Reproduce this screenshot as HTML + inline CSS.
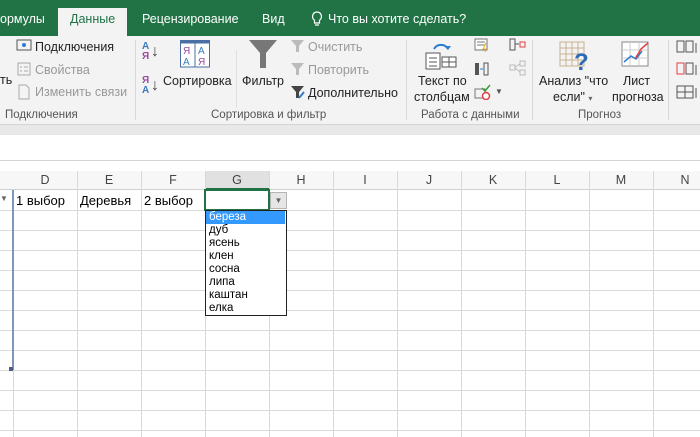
<!DOCTYPE html>
<html><head><meta charset="utf-8"><style>
*{margin:0;padding:0;box-sizing:border-box}
body{width:700px;height:437px;overflow:hidden;background:#fff;font-family:"Liberation Sans","DejaVu Sans",sans-serif;position:relative}
.a{position:absolute;white-space:nowrap}
.tab{color:#fff;font-size:12.5px;top:12px}
.rb{font-size:12.5px;color:#222}
.g{color:#999}
.gl{font-size:11.5px;color:#555;top:109px}
.sep{position:absolute;top:40px;width:1px;height:80px;background:#d8d8d8}
.vl{position:absolute;top:171px;width:1px;height:266px;background:#d9d9d9}
.hl{position:absolute;left:0;width:700px;height:1px;background:#dadada}
.ch{position:absolute;top:171px;height:19px;font-size:12.5px;color:#444;text-align:center;line-height:19px}
.cell{position:absolute;top:193px;font-size:13px;color:#000}
.dd{font-size:11.5px;color:#000;position:absolute;left:209px;line-height:13px}
</style></head><body>
<div class="a" style="left:0;top:0;width:700px;height:36px;background:#217346"></div>
<div class="a" style="left:58px;top:8px;width:69px;height:28px;background:#f3f3f3"></div>
<div class="a tab" style="left:0">ормулы</div>
<div class="a tab" style="left:70px;color:#217346">Данные</div>
<div class="a tab" style="left:142px">Рецензирование</div>
<div class="a tab" style="left:262px">Вид</div>
<svg class="a" style="left:311px;top:11px" width="12" height="16"><path d="M6 1a4.5 4.5 0 0 0-2.5 8.2V12h5V9.2A4.5 4.5 0 0 0 6 1zM4 14h4" fill="none" stroke="#fff" stroke-width="1.2"/></svg>
<div class="a tab" style="left:328px">Что вы хотите сделать?</div>
<div class="a" style="left:0;top:36px;width:700px;height:89px;background:#f3f3f3"></div>
<div class="a" style="left:0;top:124px;width:700px;height:11px;background:#e8e8e8;border-top:1px solid #d5d5d5"></div>
<div class="sep" style="left:135px"></div><div class="sep" style="left:236px;height:58px;top:50px;background:#e0e0e0"></div>
<div class="sep" style="left:406px"></div><div class="sep" style="left:532px"></div><div class="sep" style="left:668px"></div>
<div class="a rb" style="left:0;top:73px">ть</div>
<svg class="a" style="left:16px;top:39px" width="16" height="14"><rect x="1" y="1" width="14" height="10" fill="none" stroke="#555"/><circle cx="8" cy="6" r="2" fill="#2b7cd3"/></svg>
<div class="a rb" style="left:35px;top:40px">Подключения</div>
<svg class="a" style="left:17px;top:62px" width="14" height="14"><rect x="1" y="1" width="12" height="12" fill="none" stroke="#aaa"/><path d="M3 5h2M7 5h4M3 9h2M7 9h4" stroke="#aaa"/></svg>
<div class="a rb g" style="left:35px;top:63px">Свойства</div>
<svg class="a" style="left:17px;top:84px" width="14" height="16"><path d="M2 1h7l3 3v11H2z" fill="none" stroke="#aaa"/></svg>
<div class="a rb g" style="left:35px;top:85px">Изменить связи</div>
<div class="a gl" style="left:5px">Подключения</div>
<div class="a" style="left:142px;top:42px;font-size:10px;line-height:10px;font-weight:bold;color:#3a7bbf">А<br><span style="color:#9a4c9e">Я</span></div><div class="a" style="left:151px;top:43px;font-size:16px;color:#444">↓</div>
<div class="a" style="left:142px;top:76px;font-size:10px;line-height:10px;font-weight:bold;color:#9a4c9e">Я<br><span style="color:#3a7bbf">А</span></div><div class="a" style="left:151px;top:77px;font-size:16px;color:#444">↓</div>
<svg class="a" style="left:180px;top:40px" width="30" height="28"><rect x="0" y="0" width="30" height="3" fill="#4a6fa5"/><rect x=".5" y="3" width="29" height="24" fill="#fff" stroke="#4a6fa5"/><line x1="15" y1="3" x2="15" y2="27" stroke="#4a6fa5"/><text x="3" y="14" font-size="10" fill="#9a4c9e" font-family="Liberation Sans">Я</text><text x="18" y="14" font-size="10" fill="#3a7bbf" font-family="Liberation Sans">А</text><text x="3" y="25" font-size="10" fill="#3a7bbf" font-family="Liberation Sans">А</text><text x="18" y="25" font-size="10" fill="#9a4c9e" font-family="Liberation Sans">Я</text></svg>
<div class="a rb" style="left:163px;top:74px">Сортировка</div>
<svg class="a" style="left:248px;top:39px" width="30" height="30"><path d="M1 1h28L18 14v15h-6V14z" fill="#777"/></svg>
<div class="a rb" style="left:242px;top:74px">Фильтр</div>
<svg class="a" style="left:290px;top:39px" width="16" height="14"><path d="M1 1h13l-5 6v6h-3V7z" fill="#bbb"/></svg>
<div class="a rb g" style="left:308px;top:40px">Очистить</div>
<svg class="a" style="left:290px;top:62px" width="16" height="14"><path d="M1 1h13l-5 6v6h-3V7z" fill="#bbb"/></svg>
<div class="a rb g" style="left:308px;top:63px">Повторить</div>
<svg class="a" style="left:290px;top:85px" width="16" height="14"><path d="M1 1h13l-5 6v6h-3V7z" fill="#444"/><path d="M9 13l5-6" stroke="#2b7cd3" stroke-width="2"/></svg>
<div class="a rb" style="left:308px;top:86px">Дополнительно</div>
<div class="a gl" style="left:211px">Сортировка и фильтр</div>
<svg class="a" style="left:424px;top:39px" width="34" height="32"><path d="M10 10a8 8 0 0 1 14 0" fill="none" stroke="#2b7cd3" stroke-width="2"/><path d="M21 7l3 4 3-4" fill="#2b7cd3"/><rect x="2" y="14" width="14" height="16" fill="#fff" stroke="#555"/><path d="M5 19h8M5 23h8M5 27h8" stroke="#555"/><rect x="18" y="18" width="14" height="10" fill="#fff" stroke="#555"/><path d="M25 18v10M18 23h14" stroke="#555"/></svg>
<div class="a rb" style="left:418px;top:74px">Текст по</div>
<div class="a rb" style="left:414px;top:90px">столбцам</div>
<svg class="a" style="left:474px;top:38px" width="16" height="14"><rect x="1" y="1" width="12" height="11" fill="#fff" stroke="#777"/><path d="M3 4h8M3 7h8" stroke="#777"/><path d="M12 5l-3 6h3l-1 3" stroke="#f0b400" fill="none"/></svg>
<svg class="a" style="left:474px;top:62px" width="16" height="14"><rect x="1" y="1" width="4" height="12" fill="#555"/><rect x="10" y="1" width="4" height="12" fill="none" stroke="#555"/><path d="M6 7h3" stroke="#2b7cd3"/></svg>
<svg class="a" style="left:474px;top:84px" width="18" height="16"><rect x="1" y="5" width="10" height="9" fill="none" stroke="#777"/><path d="M8 4l3 3 5-6" stroke="#3a9a3a" fill="none" stroke-width="1.5"/><circle cx="12" cy="12" r="3.5" fill="#fff" stroke="#e04040" stroke-width="1.5"/></svg>
<div class="a" style="left:495px;top:87px;font-size:8px;color:#555">▼</div>
<svg class="a" style="left:509px;top:38px" width="18" height="14"><rect x="1" y="1" width="5" height="11" fill="none" stroke="#555"/><path d="M6 6h4" stroke="#555"/><rect x="11" y="4" width="5" height="5" fill="none" stroke="#e04040"/></svg>
<svg class="a" style="left:509px;top:60px" width="18" height="16"><rect x="1" y="5" width="5" height="5" fill="none" stroke="#bbb"/><rect x="11" y="1" width="5" height="5" fill="none" stroke="#bbb"/><rect x="11" y="10" width="5" height="5" fill="none" stroke="#bbb"/><path d="M6 7l5-3M6 8l5 4" stroke="#bbb"/></svg>
<div class="a gl" style="left:421px">Работа с данными</div>
<svg class="a" style="left:558px;top:40px" width="34" height="32"><path d="M2 2h24v24H2z M2 8h24M2 14h24M2 20h24M8 2v24M14 2v24M20 2v24" fill="none" stroke="#c8b090"/><text x="16" y="30" font-size="24" font-weight="bold" fill="#2b6cb3" font-family="Liberation Sans">?</text></svg>
<div class="a rb" style="left:539px;top:74px">Анализ "что</div>
<div class="a rb" style="left:553px;top:90px">если" <span style="font-size:8px;color:#666">▾</span></div>
<svg class="a" style="left:620px;top:40px" width="34" height="30"><rect x="2" y="2" width="26" height="24" fill="#fff" stroke="#888"/><path d="M2 10h26M2 18h26M10 2v24M19 2v24" stroke="#ccc"/><path d="M4 22l7-6 5 3 6-8" stroke="#2b7cd3" fill="none" stroke-width="1.5"/><path d="M15 19l6-10 7-6" stroke="#e04040" fill="none" stroke-width="1.5"/></svg>
<div class="a rb" style="left:623px;top:74px">Лист</div>
<div class="a rb" style="left:612px;top:90px">прогноза</div>
<div class="a gl" style="left:578px">Прогноз</div>
<svg class="a" style="left:676px;top:40px" width="24" height="62"><rect x="1" y="1" width="7" height="11" fill="none" stroke="#555"/><rect x="10" y="1" width="7" height="11" fill="none" stroke="#555"/><path d="M20 3v10" stroke="#555"/><rect x="1" y="23" width="7" height="11" fill="none" stroke="#e04040"/><rect x="10" y="23" width="7" height="11" fill="none" stroke="#555"/><path d="M20 25v10" stroke="#555"/><rect x="1" y="46" width="16" height="12" fill="none" stroke="#555"/><path d="M9 46v12M1 52h16M20 48v10" stroke="#555"/></svg>
<div class="a" style="left:0;top:160px;width:700px;height:1px;background:#d4d4d4"></div>
<div class="a" style="left:0;top:171px;width:700px;height:19px;background:#f7f7f7;border-bottom:1px solid #d0d0d0"></div>
<div class="a" style="left:205px;top:171px;width:64px;height:19px;background:#e1e1e1;border-bottom:2px solid #217346"></div>
<div class="ch" style="left:13px;width:64px">D</div><div class="ch" style="left:77px;width:64px">E</div><div class="ch" style="left:141px;width:64px">F</div><div class="ch" style="left:205px;width:64px">G</div><div class="ch" style="left:269px;width:64px">H</div><div class="ch" style="left:333px;width:64px">I</div><div class="ch" style="left:397px;width:64px">J</div><div class="ch" style="left:461px;width:64px">K</div><div class="ch" style="left:525px;width:64px">L</div><div class="ch" style="left:589px;width:64px">M</div><div class="ch" style="left:653px;width:64px">N</div>
<div class="hl" style="top:210px"></div><div class="hl" style="top:230px"></div><div class="hl" style="top:250px"></div><div class="hl" style="top:270px"></div><div class="hl" style="top:290px"></div><div class="hl" style="top:310px"></div><div class="hl" style="top:330px"></div><div class="hl" style="top:350px"></div><div class="hl" style="top:370px"></div><div class="hl" style="top:390px"></div><div class="hl" style="top:410px"></div><div class="hl" style="top:430px"></div>
<div class="vl" style="left:77px"></div><div class="vl" style="left:141px"></div><div class="vl" style="left:205px"></div><div class="vl" style="left:269px"></div><div class="vl" style="left:333px"></div><div class="vl" style="left:397px"></div><div class="vl" style="left:461px"></div><div class="vl" style="left:525px"></div><div class="vl" style="left:589px"></div><div class="vl" style="left:653px"></div>
<div class="vl" style="left:12px;top:190px;height:180px;width:2px;background:#7a98b8"></div>
<div class="vl" style="left:13px;top:370px;height:67px"></div>
<div class="a" style="left:9px;top:367px;width:4px;height:4px;background:#4a5f8a"></div>
<div class="a" style="left:0;top:194px;font-size:8px;color:#666">▼</div>
<div class="cell" style="left:16px">1 выбор</div>
<div class="cell" style="left:80px">Деревья</div>
<div class="cell" style="left:144px">2 выбор</div>
<div class="a" style="left:204px;top:189px;width:66px;height:22px;border:2px solid #217346;background:#fff"></div>
<div class="a" style="left:270px;top:192px;width:17px;height:17px;background:#e6e6e6;border:1px solid #b5b5b5;font-size:8px;color:#666;text-align:center;line-height:15px">▼</div>
<div class="a" style="left:205px;top:210px;width:82px;height:106px;background:#fff;border:1px solid #222"></div>
<div class="a" style="left:206px;top:211px;width:79px;height:13px;background:#3399ff"></div>
<div class="dd" style="top:211px;color:#fff">береза</div>
<div class="dd" style="top:224px">дуб</div>
<div class="dd" style="top:237px">ясень</div>
<div class="dd" style="top:250px">клен</div>
<div class="dd" style="top:263px">сосна</div>
<div class="dd" style="top:276px">липа</div>
<div class="dd" style="top:289px">каштан</div>
<div class="dd" style="top:302px">елка</div>
</body></html>
